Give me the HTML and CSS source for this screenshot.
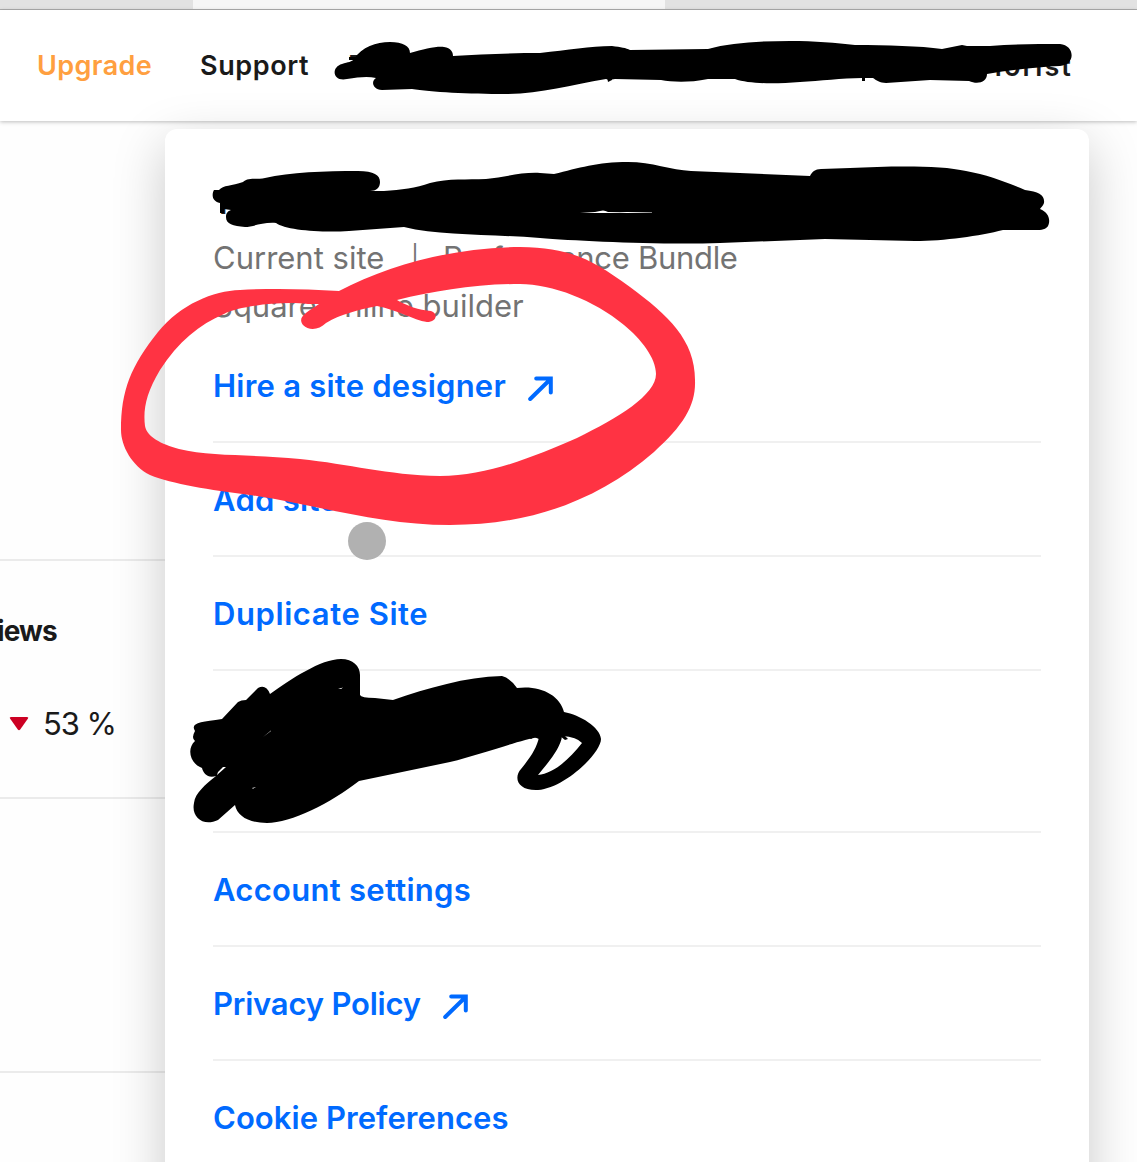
FILE: index.html
```
<!DOCTYPE html>
<html lang="en">
<head>
<meta charset="utf-8">
<title>Site menu</title>
<link rel="stylesheet" href="styles.css">
</head>
<body>
<div class="page">
  <div class="tabs"><div class="tab-active"></div></div>
  <header class="header">
    <a class="nav upgrade">Upgrade</a>
    <a class="nav support">Support</a>
    <span class="nav site-t">T</span>
    <span class="nav florist">Florist</span>
  </header>
  <main class="dashboard">
    <section class="stat first"></section>
    <section class="stat views">
      <h2 class="stat-title">iews</h2>
      <div class="change"><svg class="down" viewBox="0 0 20 14"><path d="M2 0H18Q20 0 18.8 1.8L11.2 12.4Q10 14 8.8 12.4L1.2 1.8Q0 0 2 0Z"/></svg><span class="percent">53 %</span></div>
    </section>
    <section class="stat third"></section>
  </main>

  <div class="menu">
    <div class="current">
      <div class="site-name">T</div>
      <div class="detail"><span class="d1">Current site</span><span class="bar">|</span><span class="d2">Performance Bundle</span></div>
      <div class="detail d3">Square online builder</div>
      <a class="link hire"><span class="t-hire">Hire a site designer</span><svg class="arrow" viewBox="0 0 26 26"><path d="M2.2 24L22.6 4M8.2 3.4H22.8V17.6"/></svg></a>
    </div>
    <a class="link row t-add">Add site</a>
    <a class="link row t-dup">Duplicate Site</a>
    <div class="account"></div>
    <a class="link row t-acc">Account settings</a>
    <a class="link row"><span class="t-priv">Privacy Policy</span><svg class="arrow" viewBox="0 0 26 26"><path d="M2.2 24L22.6 4M8.2 3.4H22.8V17.6"/></svg></a>
    <a class="link row last t-cookie">Cookie Preferences</a>
  </div>

  <svg class="ink" viewBox="0 0 1137 1162">
    <!-- header marker -->
    <path d="M342 64C348 62 352 62 354 59C362 47 376 42 390 42C403 42 410 46 410 53C424 49 437 46 444 47C451 48 453 52 453 56C481 54 514 53 540 53C568 50 590 46 612 46C621 47 626 48 630 50L708 49C730 43 758 41 790 41C815 41 836 43 855 45C887 45 920 46 942 49L962 45L967 46L990 46C1015 44 1040 44 1060 44C1075 45 1076 65 1060 66C1037 67 1010 70 987 74C987 82 978 85 969 81L930 80L886 83C880 83 876 80 873 78L862 78C842 78 820 81 800 82C775 84 749 84 735 79L708 79C688 83 672 82 661 80L615 79L609 80L606 79C570 85 540 94 505 94C470 94 430 92 412 89L382 90C372 89 371 81 376 78C368 76 359 77 347 79C332 82 331 67 342 64Z"/>
    <path d="M607 77H612V80L608 82ZM862 77H865V81H862ZM349 57H356V60H349Z"/>
    <!-- site name marker -->
    <path d="M214 190H219C223 185 232 186 243 182C248 177 258 180 265 178C290 172 325 171 358 171C374 171 380 175 380 182C380 188 376 191 370 191H384C401 190 416 188 430 183C449 178 467 180 486 179C505 177 522 172 540 173L554 174C579 168 597 162 628 162C652 162 671 170 691 171L810 176C812 172 815 169 821 169L850 168C890 166 941 165 966 171C988 175 1006 182 1025 190C1039 192 1045 195 1044 203C1043 206 1041 207 1040 209C1047 212 1050 217 1049 223C1048 229 1043 230 1038 230H1003C980 236 944 241 915 241L825 239L720 243C660 245 577 241 540 238C490 234 441 236 404 227L349 231C322 233 285 230 276 223C262 222 253 227 245 227C233 226 226 224 226 217C226 213 228 211 231 210L224 209V213H220V203C211 201 212 193 214 190Z"/>
    <path class="gap" d="M580 213L595 212L600 211Q604 209.5 608 212L620 212.2L627 212L652 212.6V213Z"/>
    <!-- account marker -->
    <path fill-rule="evenodd" d="M195 731C190 723 200 722 222 719L238 702Q241 700 246 700L258 688Q266 684 270 694C291 679 321 659 341 659C353 659 360 666 360 675V695Q361 698 375 698L393 700C428 688 465 677 502 676Q510 678 517 688C540 685 560 695 564 712C580 715 600 727 601 739C601 753 565 788 538 790C518 791 513 778 521 769C530 758 537 748 539 737C520 740 482 754 450 762L359 781C331 803 291 823 267 823C249 823 237 816 235 805L218 820C203 827 191 817 194 803C195 793 205 785 216 776C208 779 203 773 202 768C189 763 187 748 195 741Q191 738 195 731ZM217 775L226 767L223 767L218 772ZM562 736C561 748 547 764 538 775C552 774 568 761 582 743Q577 737 562 736Z"/>
    <path d="M564 735L568 739L565 740L560 736ZM528 737L531 739L534 737L539 739V735Z"/>
    <path class="gap" d="M263 737L271 730.6V731ZM252 788L256 787L253 788.7ZM338 689L343 687.6L341 689Z"/>
    <!-- red circle around the designer link -->
    <path class="red" fill-rule="evenodd" d="M339 291C390 264 457 247 520 247C570 248 590 258 630 287C668 315 695 340 695 380C696 405 684 425 654 452C597 501 530 525 450 525C380 525 322 506 250 495C210 490 172 484 150 475C132 466 121 446 121 430C121 390 131 366 158 332C181 304 213 291 240 290C275 288 305 289 339 291ZM308 304C280 301 240 306 224 314C200 324 178 342 160 370C146 393 143 410 145 426C147 437 161 444 179 449C212 457 255 454 300 459C350 464 386 475 440 476C490 476 537 455 577 438C618 418 656 395 656 374C656 358 641 339 624 325C594 300 552 284 520 284C475 284 435 291 397 300C407 306 419 310 431 311C439 314 436 322 427 322C413 320 398 310 377 306C358 310 341 314 326 323C319 330 309 331 303 325C297 317 306 313 319 304Z"/>
  </svg>
  <div class="touch"></div>
</div>
</body>
</html>
```
FILE: styles.css
```
* { box-sizing: border-box; }
body { margin: 0; background: #fff; font-family: Inter, "Liberation Sans", sans-serif; color: #1a1a1a; }
.page { position: relative; width: 1137px; height: 1162px; overflow: hidden; background: #fefefe; }
.tabs { height: 10px; background: #e2e2e2; border-bottom: 1px solid #aeaeae; padding-left: 193px; }
.tab-active { width: 472px; height: 9px; background: #f6f6f6; }
.header { height: 111px; display: flex; align-items: center; padding-left: 37px; background: #fff; box-shadow: 0 1px 4px rgba(0,0,0,.26); }
.nav { font-size: 27px; font-weight: 600; line-height: 36px; white-space: nowrap; letter-spacing: .4px; }
.upgrade { color: #ff9f40; width: 163px; }
.support { width: 149px; letter-spacing: .6px; }
.site-t { width: 628px; }
.florist { padding-top: 2px; letter-spacing: 2px; }
.dashboard { width: 1000px; }
.stat { border-bottom: 2px solid #ebebeb; }
.first { height: 440px; }
.views { height: 238px; padding-top: 50px; }
.third { height: 274px; }
.stat-title { margin: 0 0 0 -3px; font-size: 28px; line-height: 40px; font-weight: 700; letter-spacing: -.9px; }
.change { display: flex; align-items: center; margin-top: 53px; padding-left: 9px; gap: 14px; }
.down { width: 20px; height: 14px; fill: #cc0023; }
.percent { font-size: 31px; line-height: 40px; letter-spacing: -1.1px; }
.menu { position: absolute; left: 165px; top: 129px; width: 924px; height: 1120px; padding: 0 48px; background: #fff; border-radius: 12px; box-shadow: 0 16px 52px rgba(0,0,0,.21); }
.current { height: 314px; padding-top: 50px; border-bottom: 2px solid #f0f0f0; }
.site-name { font-size: 31px; line-height: 48px; height: 55px; font-weight: 600; }
.detail { display: flex; height: 48px; line-height: 48px; font-size: 31px; color: #737373; white-space: nowrap; }
.d1 { width: 198px; }
.bar { width: 32px; font-size: 24px; }
.d2 { letter-spacing: -.3px; }
.link { display: flex; align-items: center; gap: 22px; color: #006aff; font-size: 31px; font-weight: 600; white-space: nowrap; }
.hire { height: 110px; }
.t-hire { letter-spacing: .23px; }
.t-add { letter-spacing: .3px; }
.t-dup { letter-spacing: .58px; }
.t-acc { letter-spacing: .28px; }
.t-priv { letter-spacing: -.2px; }
.t-cookie { letter-spacing: .06px; }
.row { height: 114px; border-bottom: 2px solid #f0f0f0; }
.last { border: 0; height: 112px; }
.account { height: 162px; border-bottom: 2px solid #f0f0f0; }
.arrow { width: 26px; height: 26px; margin-top: 6px; fill: none; stroke: #006aff; stroke-width: 4; stroke-linecap: round; stroke-linejoin: miter; }
.ink { position: absolute; left: 0; top: 0; width: 1137px; height: 1162px; }
.gap { fill: #fff; }
.red { fill: #ff3343; }
.touch { position: absolute; left: 348px; top: 522px; width: 38px; height: 38px; border-radius: 50%; background: #b1b1b1; }
```
